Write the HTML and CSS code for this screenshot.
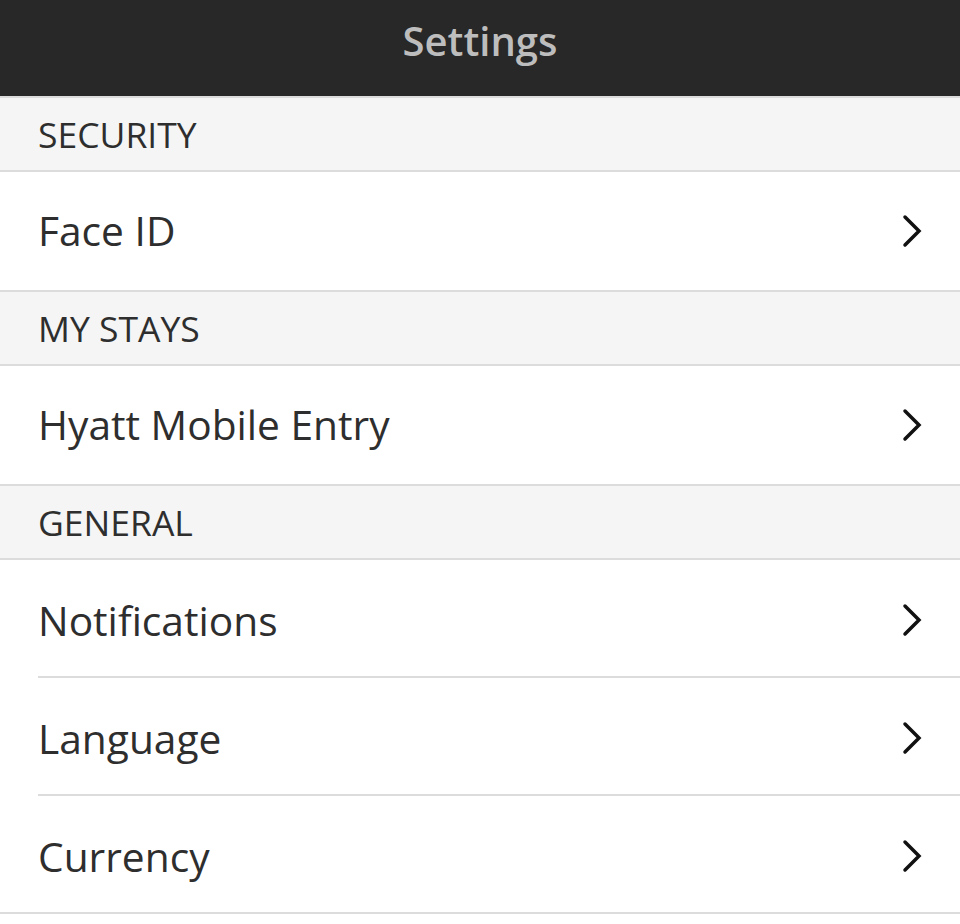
FILE: index.html
```html
<!DOCTYPE html>
<html lang="en">
<head>
    <meta charset="UTF-8" />
    <meta name="viewport" content="width=device-width, initial-scale=1.0" />
    <title>Settings</title>
    <link rel="stylesheet" href="styles.css">
</head>
<body>
    <!-- Top bar -->
    <div class="topbar">
        <h1 class="topbar-title">Settings</h1>
    </div>

    <!-- Settings list -->
    <div class="settings">
        <div class="section-title">SECURITY</div>
        <div class="group">
            <a class="item" href="#">
                <span class="item-label">Face ID</span>
                <svg class="chevron" viewBox="0 0 20 34" width="20" height="34"><path d="M3 3 L17 17 L3 31" /></svg>
            </a>
        </div>

        <div class="section-title">MY STAYS</div>
        <div class="group">
            <a class="item" href="#">
                <span class="item-label">Hyatt Mobile Entry</span>
                <svg class="chevron" viewBox="0 0 20 34" width="20" height="34"><path d="M3 3 L17 17 L3 31" /></svg>
            </a>
        </div>

        <div class="section-title">GENERAL</div>
        <div class="group group-compact">
            <a class="item" href="#">
                <span class="item-label">Notifications</span>
                <svg class="chevron" viewBox="0 0 20 34" width="20" height="34"><path d="M3 3 L17 17 L3 31" /></svg>
            </a>
            <a class="item" href="#">
                <span class="item-label">Language</span>
                <svg class="chevron" viewBox="0 0 20 34" width="20" height="34"><path d="M3 3 L17 17 L3 31" /></svg>
            </a>
            <a class="item" href="#">
                <span class="item-label">Currency</span>
                <svg class="chevron" viewBox="0 0 20 34" width="20" height="34"><path d="M3 3 L17 17 L3 31" /></svg>
            </a>
        </div>
    </div>
</body>
</html>
```

FILE: styles.css
```css
body {
    font-family: "Open Sans", Arial, sans-serif;
    background-color: #fff;
    color: #2e2e2e;
    margin: 0;
    padding: 0;
}
a {
    color: inherit;
    text-decoration: inherit;
}
/* Top bar */
.topbar {
    height: 96px;
    background-color: #282828;
    display: flex;
    align-items: center;
    justify-content: center;
    border-bottom: 2px solid #dcdcdc;
}
.topbar-title {
    margin: 0;
    font-size: 40px;
    font-weight: 600;
    color: #bdbdbd;
    padding-bottom: 16px;
}
/* List */
.section-title {
    height: 72px;
    display: flex;
    align-items: center;
    padding-left: 38px;
    background-color: #f5f5f5;
    border-bottom: 2px solid #dcdcdc;
    font-size: 35.5px;
    text-transform: uppercase;
}
.group {
    border-bottom: 2px solid #dcdcdc;
}
.item {
    height: 118px;
    margin-left: 38px;
    padding-right: 38px;
    display: flex;
    align-items: center;
    justify-content: space-between;
    border-top: 2px solid #dcdcdc;
}
.item:first-child {
    border-top: none;
}
.group-compact .item {
    height: 116px;
}
.item-label {
    font-size: 40.7px;
    padding-bottom: 2px;
}
.group-compact .item-label {
    padding-bottom: 0;
    padding-top: 4px;
}
.group-compact .chevron {
    margin-top: 4px;
}
.chevron {
    fill: none;
    stroke: #111;
    stroke-width: 3.5;
    stroke-linecap: round;
    stroke-linejoin: miter;
}
```
